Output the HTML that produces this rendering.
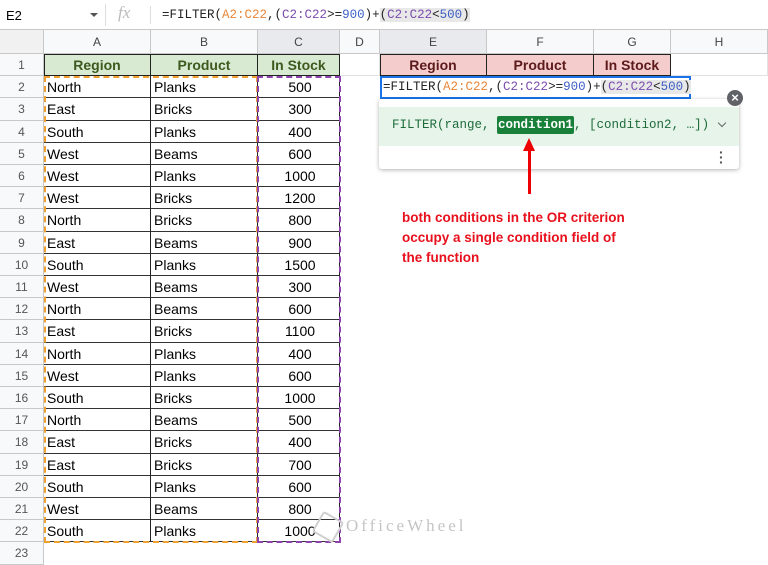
<!DOCTYPE html><html><head><style>
body{margin:0;width:768px;height:565px;overflow:hidden;background:#fff;font-family:"Liberation Sans",Arial,sans-serif;position:relative}
.a{position:absolute;box-sizing:border-box}
.mono{font-family:"Liberation Mono",monospace}
.ch{position:absolute;top:30px;height:24px;line-height:24px;text-align:center;font-size:12px;color:#444;border-right:1px solid #c8c8c8;border-bottom:1px solid #c8c8c8;background:#f8f9fa;box-sizing:border-box}
.rh{position:absolute;left:0;width:44px;text-align:center;font-size:12px;color:#555;background:#f8f9fa;border-right:1px solid #c8c8c8;border-bottom:1px solid #c8c8c8;box-sizing:border-box}
.c{position:absolute;font-size:14px;color:#000;box-sizing:border-box;padding-left:3px;white-space:nowrap;overflow:hidden}
</style></head><body>
<div class="a" style="left:0;top:0;width:768px;height:30px;border-bottom:1px solid #c8c8c8;background:#fff"></div>
<div class="a" style="left:6px;top:8px;font-size:13px">E2</div>
<div class="a" style="left:90px;top:13px;width:0;height:0;border-left:4px solid transparent;border-right:4px solid transparent;border-top:4px solid #555"></div>
<div class="a" style="left:105px;top:4px;width:1px;height:22px;background:#ddd"></div>
<div class="a" style="left:118px;top:3px;font-size:17px;color:#bbb;font-style:italic;font-family:'Liberation Serif',serif">fx</div>
<div class="a" style="left:150px;top:6px;width:1px;height:18px;background:#ddd"></div>
<div class="a mono" style="left:162px;top:8px;font-size:12.5px;color:#222;white-space:nowrap">=FILTER(<span style="color:#e8873a">A2:C22</span>,(<span style="color:#7c4dad">C2:C22</span>&gt;=<span style="color:#3d5fc4">900</span>)+<span style="background:#e8e8e8">(<span style="color:#7c4dad">C2:C22</span>&lt;<span style="color:#3d5fc4">500</span>)</span></div>
<div class="ch" style="left:0;width:44px;background:#f1f1f1"></div>
<div class="ch" style="left:44px;width:107px">A</div>
<div class="ch" style="left:151px;width:107px">B</div>
<div class="ch" style="left:258px;width:82px;background:#e8eaed">C</div>
<div class="ch" style="left:340px;width:40px">D</div>
<div class="ch" style="left:380px;width:107px;background:#e8eaed">E</div>
<div class="ch" style="left:487px;width:107px">F</div>
<div class="ch" style="left:594px;width:77px">G</div>
<div class="ch" style="left:671px;width:97px">H</div>
<div id="g"></div>
<script>
var d=[["North","Planks",500],["East","Bricks",300],["South","Planks",400],["West","Beams",600],["West","Planks",1000],["West","Bricks",1200],["North","Bricks",800],["East","Beams",900],["South","Planks",1500],["West","Beams",300],["North","Beams",600],["East","Bricks",1100],["North","Planks",400],["West","Planks",600],["South","Bricks",1000],["North","Beams",500],["East","Bricks",400],["East","Bricks",700],["South","Planks",600],["West","Beams",800],["South","Planks",1000]];
var h="",H=22.2;
for(var i=1;i<=23;i++){var t=54+H*(i-1);
h+='<div class="rh" style="top:'+t+'px;height:'+H+'px;line-height:'+H+'px">'+i+'</div>';
if(i==1){
h+='<div class="a" style="left:340px;top:'+t+'px;width:428px;height:'+H+'px;border-bottom:1px solid #e2e2e2"></div>';
[380,671,768].forEach(function(x){h+='<div class="a" style="left:'+(x-1)+'px;top:'+t+'px;width:1px;height:'+H+'px;background:#e2e2e2"></div>'});
h+='<div class="c" style="left:44px;top:'+t+'px;width:296px;height:'+H+'px;background:#d9ead3;border:1px solid #222"></div>';
[["Region",44,107],["Product",151,107],["In Stock",258,82]].forEach(function(c){h+='<div class="c" style="left:'+c[1]+'px;top:'+t+'px;width:'+c[2]+'px;height:'+H+'px;line-height:'+H+'px;text-align:center;font-weight:bold;color:#3d5a1e;border-right:1px solid #222;padding:0">'+c[0]+'</div>'});
h+='<div class="c" style="left:380px;top:'+t+'px;width:291px;height:'+H+'px;background:#f4cccc;border:1px solid #222"></div>';
[["Region",380,107],["Product",487,107],["In Stock",594,77]].forEach(function(c){h+='<div class="c" style="left:'+c[1]+'px;top:'+t+'px;width:'+c[2]+'px;height:'+H+'px;line-height:'+H+'px;text-align:center;font-weight:bold;color:#5c1a1a;border-right:1px solid #222;padding:0">'+c[0]+'</div>'});
}else if(i<=22){var r=d[i-2];
h+='<div class="c" style="left:44px;top:'+t+'px;width:107px;height:'+H+'px;line-height:'+H+'px;border-right:1px solid #222;border-bottom:1px solid #333">'+r[0]+'</div>';
h+='<div class="c" style="left:151px;top:'+t+'px;width:107px;height:'+H+'px;line-height:'+H+'px;border-right:1px solid #222;border-bottom:1px solid #333">'+r[1]+'</div>';
h+='<div class="c" style="left:258px;top:'+t+'px;width:82px;height:'+H+'px;line-height:'+H+'px;text-align:center;border-right:1px solid #222;border-bottom:1px solid #333">'+r[2]+'</div>';
}}
document.getElementById('g').innerHTML=h;
</script>
<div class="a" style="left:44px;top:76px;width:214px;height:467px;border:2px dashed #f0a030"></div>
<div class="a" style="left:257px;top:76px;width:84px;height:467px;border:2px dashed #8e44ad"></div>
<div class="a" style="left:380px;top:76px;width:311px;height:23px;border:2px solid #1a73e8;background:#fff"></div>
<div class="a mono" style="left:383px;top:80px;font-size:12.5px;color:#222;white-space:nowrap">=FILTER(<span style="color:#e8873a">A2:C22</span>,(<span style="color:#7c4dad">C2:C22</span>&gt;=<span style="color:#3d5fc4">900</span>)+<span style="background:#e8e8e8">(<span style="color:#7c4dad">C2:C22</span>&lt;<span style="color:#3d5fc4">500</span>)</span></div>
<div class="a" style="left:379px;top:99px;width:360px;height:70px;background:#fff;box-shadow:0 1px 4px rgba(0,0,0,.3);border-radius:3px"></div>
<div class="a" style="left:379px;top:107px;width:360px;height:39px;background:#e6f4ea"></div>
<div class="a mono" style="left:392px;top:118px;font-size:12.5px;color:#1e6b3a;white-space:nowrap">FILTER(range, <span style="background:#188038;color:#fff;font-weight:bold;padding:2px 1px;border-radius:2px">condition1</span>, [condition2, …])</div>
<div class="a" style="left:719px;top:120px;width:6px;height:6px;border-right:1.5px solid #666;border-bottom:1.5px solid #666;transform:rotate(45deg)"></div>
<div class="a" style="left:719px;top:150px;font-size:14px;color:#555;line-height:5px;font-weight:bold">·<br>·<br>·</div>
<div class="a" style="left:727px;top:90px;width:16px;height:16px;border-radius:50%;background:#5f6368;color:#fff;font-size:13px;line-height:16px;text-align:center;font-weight:bold">×</div>
<div class="a" style="left:528px;top:148px;width:3px;height:46px;background:#e00"></div>
<div class="a" style="left:523px;top:138px;width:0;height:0;border-left:6px solid transparent;border-right:6px solid transparent;border-bottom:13px solid #e00"></div>
<div class="a" style="left:402px;top:208px;font-size:13.5px;color:#e8101c;font-weight:bold;line-height:20px">both conditions in the OR criterion<br>occupy a single condition field of<br>the function</div>
<div class="a" style="left:346px;top:516px;font-size:17px;color:#c4c4c4;letter-spacing:3px;font-family:'Liberation Serif',serif">OfficeWheel</div>
<div class="a" style="left:316px;top:515px;width:24px;height:24px;border:2px solid #d0d0d0;transform:rotate(30deg);border-radius:3px"></div>
</body></html>
